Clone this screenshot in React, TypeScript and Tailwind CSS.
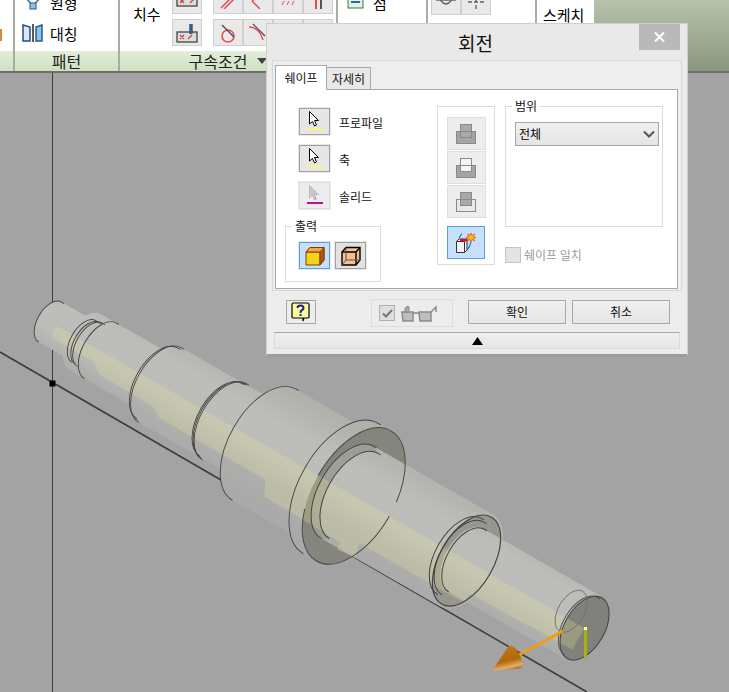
import React from 'react';

const korean = "font-['Noto_Sans_CJK_KR','Liberation_Sans',sans-serif]";
const K = 0.55;

function section(u0: number, u1: number, r: number) {
  const rx = r * K;
  return `M${u0} ${-r}L${u1} ${-r}A${rx} ${r} 0 0 1 ${u1} ${r}L${u0} ${r}A${rx} ${r} 0 0 1 ${u0} ${-r}Z`;
}

function leftArc(u: number, r: number) {
  return `M${u + 3} ${-r}L${u} ${-r}A${r * K} ${r} 0 0 0 ${u} ${r}`;
}

const sections: [number, number, number][] = [
  [0, 60, 23],
  [40, 130, 32],
  [127, 250, 43],
  [247, 340, 64],
  [335, 350, 75],
];

const arcs: [number, number][] = [
  [0, 23], [39, 24], [43, 24], [46, 25], [58, 32],
  [124, 41], [127, 43], [197, 42], [199, 43], [201, 44],
  [247, 64], [335, 75],
];

const Shaft = () => (
  <svg viewBox="0 73 729 619" className="block h-full w-full">
    <defs>
      <linearGradient id="body" gradientUnits="userSpaceOnUse" x1="0" y1="-60" x2="0" y2="60">
        <stop offset="0" stopColor="#b0b1ab" />
        <stop offset="0.3" stopColor="#bdbeb9" />
        <stop offset="0.55" stopColor="#bcbdb8" />
        <stop offset="0.75" stopColor="#aeaeac" />
        <stop offset="1" stopColor="#a9a9a9" />
      </linearGradient>
      <linearGradient id="cone" x1="0.3" y1="0" x2="0.6" y2="1">
        <stop offset="0" stopColor="#c47a10" />
        <stop offset="0.6" stopColor="#b06a08" />
        <stop offset="0.85" stopColor="#e0b070" />
        <stop offset="1" stopColor="#a86008" />
      </linearGradient>
    </defs>
    <line x1="52.5" y1="73" x2="52.5" y2="692" stroke="#3f3f3f" />
    <line x1="0" y1="352" x2="587" y2="692" stroke="#3d3d3d" strokeWidth="1.6" />
    <rect x="49.5" y="380.5" width="6" height="6" fill="#000" />
    <g transform="translate(50 322) rotate(29.8)">
      {sections.map(([a, b, r]) => (
        <path key={a} d={section(a, b, r)} fill="url(#body)" />
      ))}
      {/* flange face */}
      <ellipse cx="350" cy="0" rx="41" ry="75" fill="#85857e" />
      <path d={section(343, 480, 53)} fill="url(#body)" />
      <path d="M343 -53A29 53 0 0 0 343 53L350 49A27 49 0 0 1 350 -49Z" fill="#94948c" opacity="0.75" />
      <ellipse cx="480" cy="0" rx="27" ry="50" fill="#96968f" />
      <path d={section(478, 616, 36)} fill="url(#body)" />
      <ellipse cx="616" cy="0" rx="20" ry="35" fill="#81817b" />
      {/* sketch plane */}
      <path
        d="M8 0L616 0L616 25L566 25L566 26L499 27L499 38L378 38L382 53L362 55L362 47L273 45L265 30L143 29L131 22L69 21L57 13L8 13Z"
        fill="#ecec9c"
        opacity="0.24"
      />
      {arcs.map(([u, r]) => (
        <path key={u} d={leftArc(u, r)} fill="none" stroke="#444" strokeWidth="0.9" />
      ))}
      {/* flange outlines */}
      <ellipse cx="350" cy="0" rx="41" ry="75" fill="none" stroke="#4a4a4a" strokeWidth="1" strokeDasharray="170 36" strokeDashoffset="20" />
      <path d={leftArc(343, 53)} fill="none" stroke="#444" />
      <path d={leftArc(350, 49)} fill="none" stroke="#444" />
      <ellipse cx="480" cy="0" rx="27" ry="50" fill="none" stroke="#444" strokeWidth="1.2" />
      <path d={leftArc(472, 44)} fill="none" stroke="#444" />
      <path d={leftArc(476, 42)} fill="none" stroke="#444" />
      <path d={leftArc(480, 36)} fill="none" stroke="#444" />
      <ellipse cx="616" cy="0" rx="20" ry="35" fill="none" stroke="#444" strokeWidth="1.1" />
      <path d={leftArc(612, 33)} fill="none" stroke="#555" />
      <ellipse cx="596" cy="-8" rx="13" ry="23" fill="none" stroke="#6c6c6c" strokeWidth="0.8" />
    </g>
    <line x1="563" y1="631" x2="515" y2="657" stroke="#f29a10" strokeWidth="2.6" />
    <path d="M492 671L508 647Q511 644 515 648Q522 657 523 665Q522 669 515 669Z" fill="url(#cone)" />
    <rect x="584" y="628" width="3" height="30" fill="#a8b400" />
    <rect x="584" y="627" width="3" height="3" fill="#ffff99" />
  </svg>
);

const Cursor = ({ grey }: { grey?: boolean }) => (
  <svg width="11" height="16" viewBox="0 0 11 16">
    <path
      d="M.5.5V13L3.5 10.5 5.5 15 7.5 14 5.5 9.500H9.500Z"
      fill={grey ? '#c8c8c8' : '#fff'}
      stroke={grey ? '#9a9a9a' : '#000'}
      strokeDasharray={grey ? '1 1' : undefined}
    />
  </svg>
);

const PickButton = ({ line, grey }: { line: string; grey?: boolean }) => (
  <div
    className={`m-[1px] flex h-[27px] w-[31px] flex-col items-center border pt-[2px] shadow-[0_0_0_1px_#e8e8e8] ${
      grey ? 'border-[#dedede] bg-[#ececec]' : 'border-[#a0a0a0] bg-[#e6e6e6]'
    }`}
  >
    <Cursor grey={grey} />
    <div className="mt-[1px] h-[2px] w-[16px]" style={{ backgroundColor: line }} />
  </div>
);

const PickRow = ({ label, line, grey }: { label: string; line: string; grey?: boolean }) => (
  <div className="flex items-center gap-[8px]">
    <PickButton line={line} grey={grey} />
    <span className="mt-[2px] text-[12px] leading-none text-[#111]">{label}</span>
  </div>
);

const Extent = ({ top, bottom }: { top: string; bottom: string }) => (
  <svg width="20" height="20" viewBox="0 0 20 20">
    <rect x="4.5" y="0.5" width="11" height="13" fill={top} stroke="#8a8a8a" />
    <rect x="0.5" y="7.5" width="19" height="12" fill={bottom} stroke="#8a8a8a" />
    <rect x="4.5" y="7.5" width="11" height="6" fill={top} stroke="#8a8a8a" />
  </svg>
);

const ExtentButton = ({ top, bottom }: { top: string; bottom: string }) => (
  <div className="flex h-[33px] w-[39px] items-center justify-center border border-[#dedede] bg-[#ededed]">
    <Extent top={top} bottom={bottom} />
  </div>
);

const RevolveIcon = () => (
  <svg width="22" height="22" viewBox="0 0 22 22">
    <path d="M1.5 9.5L4 7H12V18L9.500 20.500H1.500Z" fill="#f4f4f4" stroke="#333" />
    <path d="M1.5 9.500H9.500V20.500M9.500 9.500L12 7" fill="none" stroke="#333" />
    <path d="M5 7H12V9.500H5Z" fill="#e81010" />
    <path d="M4 6L7 1.500M12 18Q15 15 16 10" fill="none" stroke="#1070c0" strokeWidth="1.100" />
    <path d="M16 1L17 3.500 19.500 2 18.500 4.500 21 5.500 18.500 6.500 19.500 9 17 7.500 16 10 15 7.500 12.500 9 13.500 6.500 11 5.500 13.500 4.500 12.500 2 15 3.500Z" fill="#f6c010" stroke="#e03010" strokeWidth="0.600" />
  </svg>
);

const SolidIcon = () => (
  <svg width="20" height="20" viewBox="0 0 20 20">
    <path d="M1 6L5 1.500H19V14L15 19H1Z" fill="#f3d21c" stroke="#8a3a00" />
    <path d="M1 6H15V19" fill="none" stroke="#8a3a00" />
    <path d="M15 6L19 1.500V14L15 19Z" fill="#a85a18" stroke="#8a3a00" />
    <path d="M1 6L5 1.500H19L15 6Z" fill="#f2a838" stroke="#8a3a00" />
  </svg>
);

const SurfaceIcon = () => (
  <svg width="20" height="20" viewBox="0 0 20 20">
    <path d="M1 6L5 1.500H19V14L15 19H1Z" fill="#f5bf90" stroke="#000" strokeWidth="1.400" />
    <path d="M1 6H15V19M15 6L19 1.500" fill="none" stroke="#000" strokeWidth="1.400" />
    <path d="M5 1.500V14H19M5 14L1 19" fill="none" stroke="#555" />
  </svg>
);

const HelpIcon = () => (
  <svg width="20" height="20" viewBox="0 0 20 20">
    <path d="M2.500 1H16.500Q18 1 18 2.500V15.500Q18 16 16 16H13L12 19V16H2.500Q1 16 1 15V2.500Q1 1 2.500 1Z" fill="#fbfb9c" stroke="#000" strokeWidth="1.200" />
    <path d="M6.500 6Q6.500 3.500 9.500 3.500T12.500 6Q12.500 7.500 10.500 8.500 9.500 9 9.500 11" fill="none" stroke="#20208c" strokeWidth="2" />
    <rect x="8.500" y="12" width="2" height="2" fill="#20208c" />
  </svg>
);

const Glasses = () => (
  <svg width="36" height="17" viewBox="0 0 36 17">
    <path d="M1 7H12V16H2Z" fill="#bebebe" stroke="#8a8a8a" strokeWidth="1.500" />
    <path d="M18 7H30V16H19Z" fill="#bebebe" stroke="#8a8a8a" strokeWidth="1.500" />
    <path d="M12 8H18M30 7L35 2V7" fill="none" stroke="#8a8a8a" strokeWidth="1.500" />
    <path d="M4 7V3L7 1 8 2V7Z" fill="#a8a8a8" stroke="#8a8a8a" />
  </svg>
);

const Dialog = () => (
  <div className={`${korean} absolute left-[266px] top-[23px] flex h-[334px] w-[422px] flex-col border border-[#cfcfcf] border-b-[3px] border-b-[#9b9b9b] bg-[#ececec] text-[#111]`}>
    {/* title bar */}
    <div className="relative flex h-[36px] shrink-0 items-center justify-center bg-[#e9e9e9] pr-[3px] text-[19px] leading-none">
      회전
      <div className="absolute right-[7px] top-0 flex h-[26px] w-[41px] items-center justify-center bg-[#b9b9b9]">
        <svg width="11" height="10" viewBox="0 0 11 10">
          <path d="M1 .5L10 9.500M10 .5L1 9.500" stroke="#fff" strokeWidth="2" />
        </svg>
      </div>
    </div>

    {/* tab group */}
    <div className="mx-[5px] h-[231px] shrink-0 border border-[#d6d6d6] bg-[#eeeeee] pl-[2px] pr-[2px] pt-[5px]">
      <div className="flex h-[23px] items-end text-[12px] leading-none">
        <div className="relative z-10 -mb-px flex h-[25px] w-[52px] items-center justify-center border border-b-0 border-[#a8a8a8] bg-white text-[#111]">
          쉐이프
        </div>
        <div className="flex h-[22px] w-[44px] items-center justify-center border border-b-0 border-l-0 border-[#a8a8a8] bg-[#e8e8e8]">
          자세히
        </div>
      </div>
      <div className="flex h-[200px] w-[403px] border border-[#a8a8a8] bg-white pl-[9px] pt-[16px]">
        {/* inputs */}
        <div className="w-[152px] shrink-0">
          <div className="flex flex-col gap-[8px] pl-[13px] pt-[1px]">
            <PickRow label="프로파일" line="#f7f77a" />
            <PickRow label="축" line="#f7f77a" />
            <PickRow label="솔리드" line="#c0109a" grey />
          </div>
          <fieldset className="mt-[10px] h-[62px] w-[96px] border border-[#dcdcdc]">
            <legend className="ml-[6px] px-[3px] text-[12px] leading-none">출력</legend>
            <div className="flex gap-[5px] pl-[13px] pt-[10px]">
              <div className="flex h-[27px] w-[31px] items-center justify-center border border-[#5a9fe0] bg-[#c6e0fa] shadow-[0_0_0_1px_#e8e8e8]">
                <SolidIcon />
              </div>
              <div className="flex h-[27px] w-[31px] items-center justify-center border border-[#a0a0a0] bg-[#e2e2e2] shadow-[0_0_0_1px_#e8e8e8]">
                <SurfaceIcon />
              </div>
            </div>
          </fieldset>
        </div>

        {/* extents */}
        <div className="flex h-[159px] w-[58px] shrink-0 flex-col items-center border border-[#dcdcdc] pt-[10px]">
          <ExtentButton top="#a9a9a9" bottom="#a4a4a4" />
          <div className="mt-[1px]"><ExtentButton top="#f4f4f4" bottom="#a4a4a4" /></div>
          <div className="mt-[1px]"><ExtentButton top="#a9a9a9" bottom="#e8e8e8" /></div>
          <div className="mt-[8px] flex h-[33px] w-[38px] items-center justify-center border border-[#5a9fe0] bg-[#c6e0fa]">
            <RevolveIcon />
          </div>
        </div>

        {/* range */}
        <div className="ml-[10px] w-[158px] shrink-0">
          <fieldset className="-mt-[6px] h-[127px] w-[158px] border border-[#dcdcdc]">
            <legend className="ml-[6px] px-[3px] text-[12px] leading-none">범위</legend>
            <div className="ml-[9px] mr-[3px] mt-[10px] flex h-[24px] items-center justify-between border border-[#a8a8a8] bg-gradient-to-b from-[#f0f0f0] to-[#e4e4e4] pl-[3px] pr-[3px] text-[12px] leading-none text-black">
              전체
              <svg width="12" height="8" viewBox="0 0 12 8">
                <path d="M1 1.500L6 6.500 11 1.500" fill="none" stroke="#555" strokeWidth="2" />
              </svg>
            </div>
          </fieldset>
          <div className="mt-[20px] flex items-center gap-[3px]">
            <div className="h-[16px] w-[16px] border border-[#c4c4c4] bg-[#e4e4e4]" />
            <span className="text-[12px] leading-none text-[#9a9a9a]">쉐이프 일치</span>
          </div>
        </div>
      </div>
    </div>

    {/* footer buttons */}
    <div className="flex h-[41px] shrink-0 items-start pl-[19px] pt-[9px] text-[12px] leading-none">
      <div className="flex h-[24px] w-[30px] items-center justify-center border border-[#a8a8a8] bg-[#ececec]">
        <HelpIcon />
      </div>
      <div className="ml-[55px] -mt-[1px] flex h-[28px] w-[82px] items-center gap-[6px] border border-[#dcdcdc] pl-[7px]">
        <div className="flex h-[16px] w-[16px] items-center justify-center border border-[#b0b0b0] bg-[#dedede]">
          <svg width="11" height="9" viewBox="0 0 11 9">
            <path d="M1 4.500L4 7.500 10 1" fill="none" stroke="#777" strokeWidth="2" />
          </svg>
        </div>
        <Glasses />
      </div>
      <div className="ml-[15px] flex h-[24px] w-[98px] items-center justify-center border border-[#a8a8a8] bg-gradient-to-b from-[#f0f0f0] to-[#e6e6e6]">
        확인
      </div>
      <div className="ml-[6px] flex h-[24px] w-[98px] items-center justify-center border border-[#a8a8a8] bg-gradient-to-b from-[#f0f0f0] to-[#e6e6e6]">
        취소
      </div>
    </div>

    {/* collapse bar */}
    <div className="mx-[7px] flex h-[17px] shrink-0 items-center justify-center border border-t-[#a8a8a8] border-x-[#dadada] border-b-[#dadada] bg-gradient-to-b from-[#efefef] to-[#e6e6e6]">
      <svg width="11" height="8" viewBox="0 0 11 8">
        <path d="M5.500 0L11 8H0Z" fill="#000" />
      </svg>
    </div>
  </div>
);

const RibbonButton = ({ children }: { children?: React.ReactNode }) => (
  <div className="flex h-[27px] w-[30px] items-center justify-center overflow-hidden border border-[#cfcfcf] bg-[#e9e9e9]">
    {children}
  </div>
);

const Group = ({ width, title, children }: { width: string; title?: React.ReactNode; children?: React.ReactNode }) => (
  <div className={`flex h-full shrink-0 flex-col border-r-2 border-r-[#a9aca5] ${width}`}>
    <div className="flex h-[52px] flex-col justify-end overflow-hidden bg-white">{children}</div>
    <div className="flex h-[20px] items-center justify-center bg-gradient-to-b from-[#e2eed8] to-[#cfe0c0] text-[16px] leading-none text-[#222]">
      {title}
    </div>
  </div>
);

const Ribbon = () => (
  <div className={`${korean} flex h-[73px] shrink-0 border-b-2 border-b-[#6e6e6e] bg-gradient-to-b from-[#b7c2ad] to-[#8b977d]`}>
    <Group width="w-[15px]">
      <div className="mb-[10px] h-[12px] w-[2px] bg-[#d98a30]" />
    </Group>
    <Group width="w-[105px]" title="패턴">
      <div className="flex flex-col gap-[11px] pb-[8px] pl-[7px]">
        <div className="flex items-center gap-[6px]">
          <svg width="22" height="20" viewBox="0 0 22 20">
            <path d="M11 14L4 6M11 14L18 6" stroke="#3a6ea8" strokeWidth="1.500" fill="none" />
            <rect x="1" y="1" width="6" height="6" fill="#8ec4e8" stroke="#2a5a90" />
            <rect x="15" y="1" width="6" height="6" fill="#8ec4e8" stroke="#2a5a90" />
            <rect x="8" y="11" width="6" height="6" fill="#8ec4e8" stroke="#2a5a90" />
          </svg>
          <span className="text-[15px] leading-none">원형</span>
        </div>
        <div className="flex items-center gap-[6px]">
          <svg width="22" height="20" viewBox="0 0 22 20">
            <path d="M1 2L8 4V18H1Z" fill="#d9e6f4" stroke="#2a4a80" strokeWidth="1.500" />
            <path d="M20 2L14 4V18H20Z" fill="#8ec4e8" stroke="#2a5a90" strokeWidth="1.500" />
            <path d="M11 1V19" stroke="#222" strokeWidth="1.500" />
          </svg>
          <span className="text-[15px] leading-none">대칭</span>
        </div>
      </div>
    </Group>
    <Group
      width="w-[218px]"
      title={
        <span className="flex items-center gap-[10px]">
          구속조건
          <svg width="10" height="6" viewBox="0 0 10 6"><path d="M0 0H10L5 6Z" fill="#444" /></svg>
        </span>
      }
    >
      <div className="flex items-end gap-[11px] pb-[5px] pl-[13px]">
        <span className="mb-[25px] w-[28px] text-[15px] leading-none">치수</span>
        <div className="flex flex-col gap-[5px]">
          <RibbonButton>
            <svg width="22" height="14" viewBox="0 0 22 14">
              <rect x="1" y="2" width="20" height="10" fill="#ddd" stroke="#444" strokeWidth="1.300" />
              <path d="M4 5L8 9M4 9L8 5M14 9L18 5" stroke="#d04040" strokeWidth="1.300" />
            </svg>
          </RibbonButton>
          <RibbonButton>
            <svg width="22" height="22" viewBox="0 0 22 22">
              <rect x="1" y="10" width="20" height="10" fill="#ddd" stroke="#444" strokeWidth="1.300" />
              <path d="M4 13L8 17M4 17L8 13M12 17L16 13" stroke="#d04040" strokeWidth="1.300" />
              <path d="M15 2V12" stroke="#3a5a90" strokeWidth="3.500" />
            </svg>
          </RibbonButton>
        </div>
        <div className="grid grid-cols-4">
          <div className="col-span-4 mb-[5px] grid grid-cols-4">
            <RibbonButton><svg width="20" height="16" viewBox="0 0 20 16"><path d="M3 15L17 1M6 16L20 2" stroke="#e05050" strokeWidth="1.500" /></svg></RibbonButton>
            <RibbonButton><svg width="20" height="16" viewBox="0 0 20 16"><path d="M4 8L12 16M4 8L14 0" stroke="#e05050" strokeWidth="1.500" /></svg></RibbonButton>
            <RibbonButton><svg width="20" height="16" viewBox="0 0 20 16"><path d="M2 6H18" stroke="#e05050" strokeWidth="2" /><path d="M4 12L6 8M9 12L11 8M14 12L16 8" stroke="#e05050" /></svg></RibbonButton>
            <RibbonButton><svg width="20" height="16" viewBox="0 0 20 16"><path d="M8 0V16" stroke="#e05050" strokeWidth="2" /><path d="M13 0V16" stroke="#555" strokeWidth="2" /></svg></RibbonButton>
          </div>
          <RibbonButton><svg width="22" height="22" viewBox="0 0 22 22"><circle cx="11" cy="14" r="6" fill="none" stroke="#e05050" strokeWidth="1.600" /><path d="M5 3L17 15" stroke="#444" strokeWidth="1.200" /></svg></RibbonButton>
          <RibbonButton><svg width="22" height="22" viewBox="0 0 22 22"><path d="M2 5Q12 5 16 18" fill="none" stroke="#e05050" strokeWidth="1.400" /><path d="M6 2L18 14" stroke="#444" strokeWidth="1.200" /></svg></RibbonButton>
          <RibbonButton />
          <RibbonButton />
        </div>
      </div>
    </Group>
    <Group width="w-[90px]">
      <div className="flex items-center gap-[9px] pb-[40px] pl-[9px]">
        <svg width="17" height="18" viewBox="0 0 17 18">
          <rect x="1" y="1" width="15" height="14" fill="#e8f0e0" stroke="#2a7a50" />
          <path d="M4 5H13M4 9H13" stroke="#1f6fb0" strokeWidth="2" />
        </svg>
        <span className="text-[15px] leading-none">점</span>
      </div>
    </Group>
    <Group width="w-[109px]">
      <div className="flex pb-[36px] pl-[3px]">
        <RibbonButton>
          <svg width="22" height="20" viewBox="0 0 22 20"><path d="M3 4Q11 20 19 4M1 8H21" fill="none" stroke="#666" strokeWidth="1.400" /></svg>
        </RibbonButton>
        <RibbonButton>
          <svg width="20" height="20" viewBox="0 0 20 20"><path d="M10 1V19M2 10H18" stroke="#666" strokeWidth="1.400" strokeDasharray="4 2" /></svg>
        </RibbonButton>
      </div>
    </Group>
    <div className="flex h-full w-[57px] shrink-0 flex-col bg-white">
      <div className="flex h-[52px] flex-col justify-end pb-[30px] pl-[6px] text-[15px] leading-none">스케치</div>
    </div>
  </div>
);

export default function App() {
  return (
    <div className="relative flex h-[692px] w-[729px] flex-col overflow-hidden bg-[#a3a3a3]">
      <Ribbon />
      <div className="min-h-0 flex-1">
        <Shaft />
      </div>
      <Dialog />
    </div>
  );
}
